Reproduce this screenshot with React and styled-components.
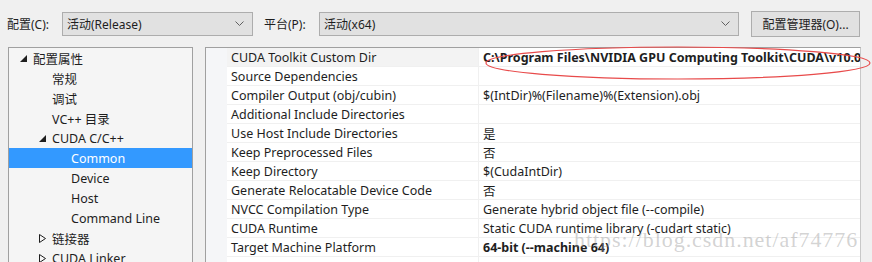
import React from 'react';
import styled, { createGlobalStyle } from 'styled-components';

const GlobalStyle = createGlobalStyle`
  html, body {
    margin: 0;
    padding: 0;
    background: #f0f0f0;
  }
  body {
    width: 872px;
    height: 262px;
    overflow: hidden;
    font-family: "Noto Sans", "Noto Sans CJK SC", sans-serif;
    font-size: 12px;
    color: #1e1e1e;
  }
`;

// indent = distance from the panel's inner edge to the label
const treeItems = [
  { label: '配置属性', indent: 24, toggle: 'open' },
  { label: '常规', indent: 43 },
  { label: '调试', indent: 43 },
  { label: 'VC++ 目录', indent: 43 },
  { label: 'CUDA C/C++', indent: 43, toggle: 'open' },
  { label: 'Common', indent: 62, selected: true },
  { label: 'Device', indent: 62 },
  { label: 'Host', indent: 62 },
  { label: 'Command Line', indent: 62 },
  { label: '链接器', indent: 43, toggle: 'closed' },
  { label: 'CUDA Linker', indent: 43, toggle: 'closed' },
];

const properties = [
  { name: 'CUDA Toolkit Custom Dir', value: 'C:\\Program Files\\NVIDIA GPU Computing Toolkit\\CUDA\\v10.0', bold: true, active: true },
  { name: 'Source Dependencies', value: '' },
  { name: 'Compiler Output (obj/cubin)', value: '$(IntDir)%(Filename)%(Extension).obj' },
  { name: 'Additional Include Directories', value: '' },
  { name: 'Use Host Include Directories', value: '是' },
  { name: 'Keep Preprocessed Files', value: '否' },
  { name: 'Keep Directory', value: '$(CudaIntDir)' },
  { name: 'Generate Relocatable Device Code', value: '否' },
  { name: 'NVCC Compilation Type', value: 'Generate hybrid object file (--compile)' },
  { name: 'CUDA Runtime', value: 'Static CUDA runtime library (-cudart static)' },
  { name: 'Target Machine Platform', value: '64-bit (--machine 64)', bold: true },
  { name: '', value: '' },
];

const Toggle = ({ kind }) =>
  kind === 'open' ? (
    <svg width="7" height="7" viewBox="0 0 7 7">
      <polygon points="7,0 7,7 0,7" fill="#1e1e1e" />
    </svg>
  ) : (
    <svg width="7" height="9" viewBox="0 0 7 9">
      <polygon points="0.5,0.5 6.5,4.5 0.5,8.5" fill="none" stroke="#1e1e1e" strokeWidth="1" />
    </svg>
  );

const Chevron = () => (
  <ChevronIcon width="9" height="6" viewBox="0 0 9 6">
    <polyline points="0.5,0.5 4.5,4.5 8.5,0.5" fill="none" stroke="#606060" strokeWidth="1" />
  </ChevronIcon>
);

const App = () => {
  return (
    <Page>
      <GlobalStyle />
      <TopBar>
        <Label>配置(C):</Label>
        <Combo $width={191}>
          <span>活动(Release)</span>
          <Chevron />
        </Combo>
        <Label $gap={11}>平台(P):</Label>
        <Combo $width={420}>
          <span>活动(x64)</span>
          <Chevron />
        </Combo>
        <Button>配置管理器(O)...</Button>
      </TopBar>
      <Main>
        <Tree>
          {treeItems.map((item, i) => (
            <TreeRow key={i} $selected={item.selected}>
              <ToggleSlot $indent={item.indent}>
                {item.toggle && <Toggle kind={item.toggle} />}
              </ToggleSlot>
              <TreeLabel>{item.label}</TreeLabel>
            </TreeRow>
          ))}
        </Tree>
        <Grid>
          <Gutter />
          <Table>
            {properties.map((p, i) => (
              <PropRow key={i}>
                <NameCell $active={p.active}>{p.name}</NameCell>
                <ValueCell $bold={p.bold}>{p.value}</ValueCell>
              </PropRow>
            ))}
          </Table>
          <Highlight viewBox="0 0 390 36" width="390" height="36">
            <ellipse cx="195" cy="18" rx="192" ry="16" fill="none" stroke="#e84a4a" strokeWidth="1.2" />
          </Highlight>
          <Watermark>https://blog.csdn.net/af74776</Watermark>
        </Grid>
      </Main>
    </Page>
  );
};

const Page = styled.div`
  width: 872px;
  height: 262px;
  position: relative;
  overflow: hidden;
`;

const TopBar = styled.div`
  display: flex;
  align-items: center;
  height: 47px;
  padding: 1px 0 0 7px;
  box-sizing: border-box;
`;

const Label = styled.span`
  margin-left: ${(p) => p.$gap || 0}px;
  width: 55px;
  font-size: 12px;
`;

const Combo = styled.div`
  width: ${(p) => p.$width}px;
  height: 24px;
  box-sizing: border-box;
  border: 1px solid #adadad;
  background: #e1e1e1;
  display: flex;
  align-items: center;
  justify-content: space-between;
  padding: 0 8px 0 4px;
  font-size: 12px;
`;

const ChevronIcon = styled.svg`
  display: block;
`;

const Button = styled.div`
  margin-left: 12px;
  width: 109px;
  height: 26px;
  box-sizing: border-box;
  border: 1px solid #adadad;
  background: #e1e1e1;
  display: flex;
  align-items: center;
  justify-content: center;
  font-size: 12px;
`;

const Main = styled.div`
  display: flex;
  align-items: flex-start;
  padding-left: 8px;
`;

const Tree = styled.div`
  width: 185px;
  height: 240px;
  box-sizing: border-box;
  border: 1px solid #a0a0a0;
  border-bottom: none;
  background: #f5f5f5;
`;

const TreeRow = styled.div`
  display: flex;
  align-items: center;
  height: 20px;
  background: ${(p) => (p.$selected ? '#3399ff' : 'transparent')};
  color: ${(p) => (p.$selected ? '#ffffff' : '#1e1e1e')};
  font-size: 12.5px;
`;

const ToggleSlot = styled.span`
  display: flex;
  align-items: center;
  width: 13px;
  margin-left: ${(p) => p.$indent - 13}px;
`;

const TreeLabel = styled.span`
  white-space: nowrap;
`;

const Grid = styled.div`
  position: relative;
  margin-left: 12px;
  width: 656px;
  height: 240px;
  box-sizing: border-box;
  border: 1px solid #a0a0a0;
  border-bottom: none;
  border-right-color: #c8c8c8;
  background: #ffffff;
  display: flex;
`;

const Gutter = styled.div`
  width: 21px;
  background: #f5f6f8;
  flex-shrink: 0;
`;

const Table = styled.div`
  flex: 1;
  display: flex;
  flex-direction: column;
`;

const PropRow = styled.div`
  display: grid;
  grid-template-columns: 252px 1fr;
  height: 19px;
  box-sizing: border-box;
  border-bottom: 1px solid #f0f0f0;
`;

const NameCell = styled.div`
  padding: 1px 0 0 4px;
  display: flex;
  align-items: center;
  border-right: 1px solid #f0f0f0;
  background: ${(p) => (p.$active ? '#f3f3f3' : '#ffffff')};
  white-space: nowrap;
  font-size: 12.5px;
`;

const ValueCell = styled.div`
  padding: 1px 0 0 4px;
  display: flex;
  align-items: center;
  white-space: nowrap;
  overflow: hidden;
  font-weight: ${(p) => (p.$bold ? 700 : 400)};
  font-size: 12.5px;
`;

const Highlight = styled.svg`
  position: absolute;
  left: 277px;
  top: -3px;
  overflow: visible;
`;

const Watermark = styled.div`
  position: absolute;
  left: 368px;
  top: 179px;
  font-family: "Liberation Serif", "DejaVu Serif", serif;
  font-size: 22px;
  letter-spacing: 0.95px;
  color: rgba(150, 150, 150, 0.42);
  white-space: nowrap;
  pointer-events: none;
`;

export default App;
